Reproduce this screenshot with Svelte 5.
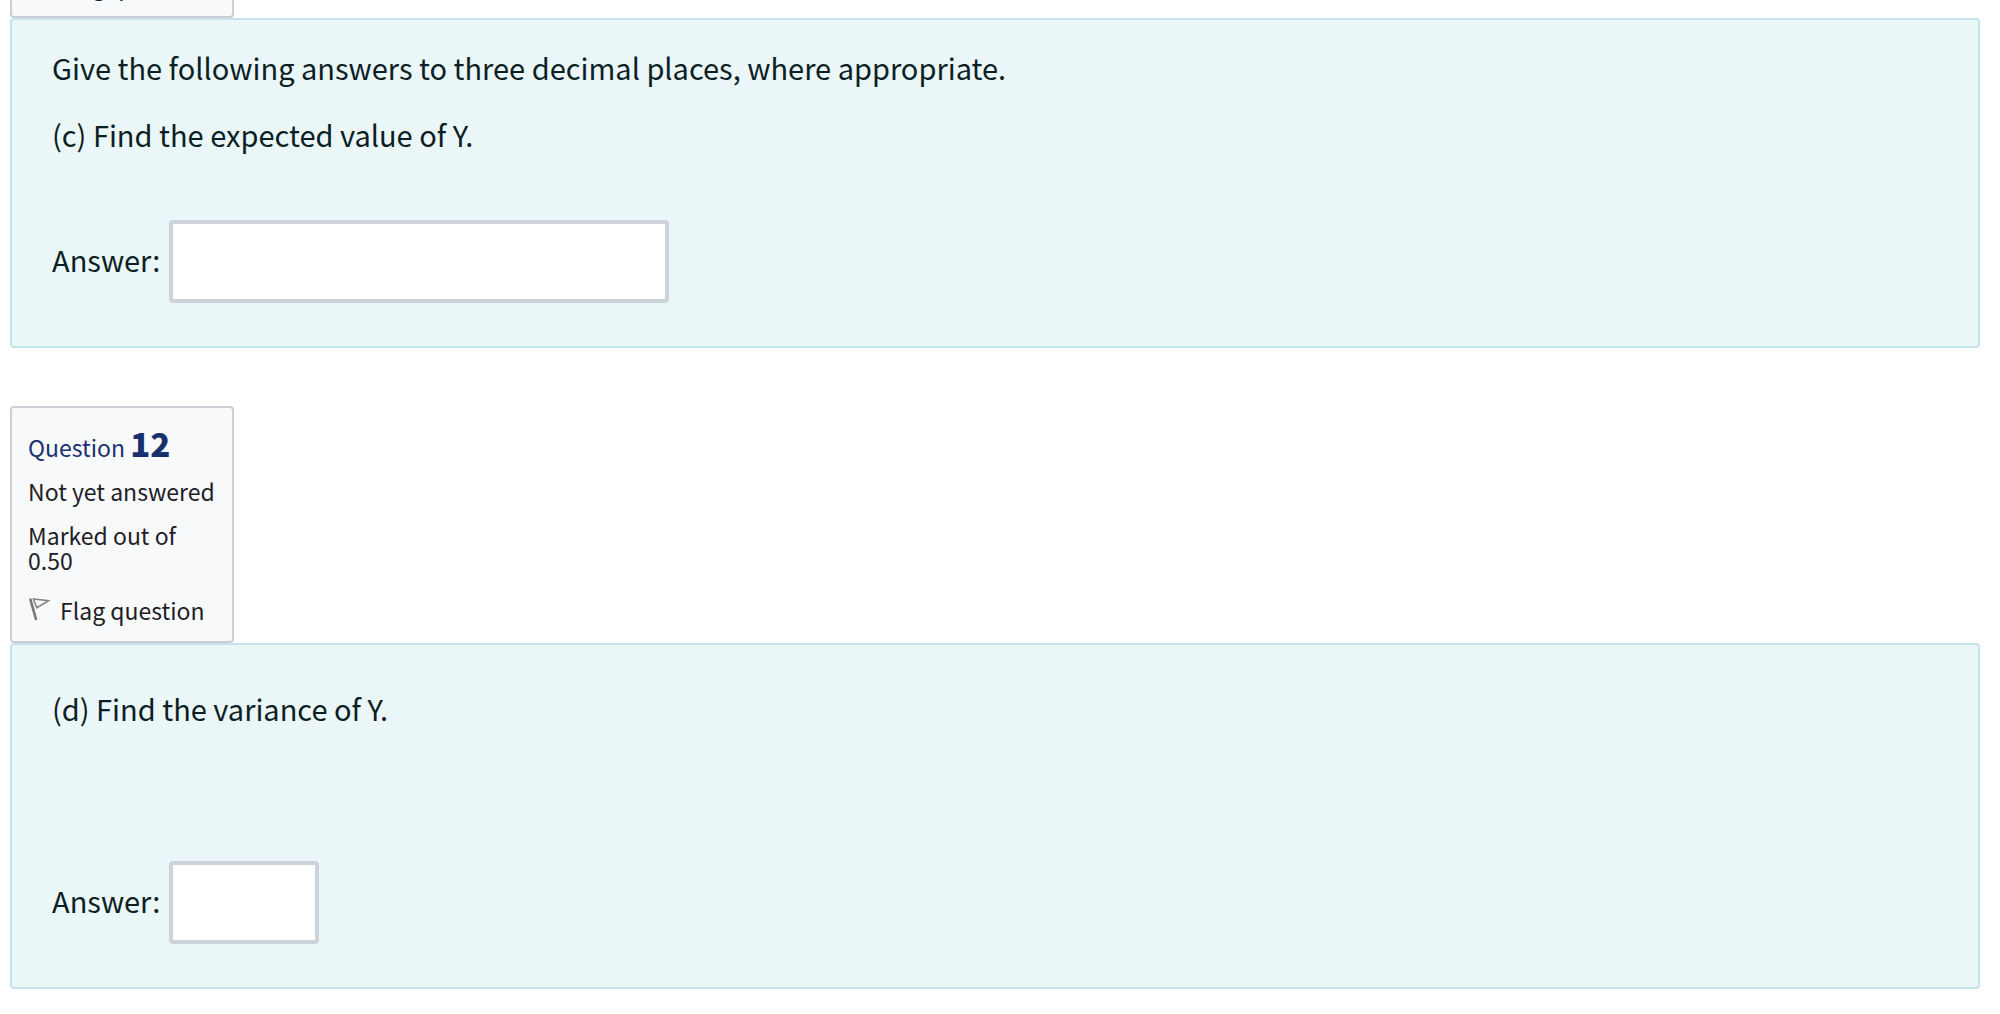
<script lang="ts">
    let questions = $state([
        {
            number: 11,
            paragraphs: [
                'Give the following answers to three decimal places, where appropriate.',
                '(c) Find the expected value of Y.'
            ],
            size: 'wide',
            spaced: false,
            answer: ''
        },
        {
            number: 12,
            paragraphs: ['(d) Find the variance of Y.', '\u00a0'],
            size: 'narrow',
            spaced: true,
            answer: ''
        }
    ]);
</script>

<main>
    {#each questions as q (q.number)}
        <section class="question">
            <div class="info">
                <h3>Question <span class="qno">{q.number}</span></h3>
                <div class="state">Not yet answered</div>
                <div class="grade">Marked out of 0.50</div>
                <a class="flag" href="#flag-{q.number}">
                    <svg width="22" height="24" viewBox="0 0 22 24" fill="none" aria-hidden="true">
                        <path d="M2.2 0.6 8.2 22" stroke="#777" stroke-width="2.6" />
                        <path d="M5.4 1 20.6 2.6 8.8 9.8Z" stroke="#858585" stroke-width="1.6" />
                    </svg>
                    <span>Flag question</span>
                </a>
            </div>

            <div class="formulation">
                <div class="qtext" class:spaced={q.spaced}>
                    {#each q.paragraphs as text}
                        <p>{text}</p>
                    {/each}
                </div>
                <div class="answer">
                    <label for="answer-{q.number}">Answer:</label>
                    <input id="answer-{q.number}" class={q.size} type="text" bind:value={q.answer} />
                </div>
            </div>
        </section>
    {/each}
</main>

<style>
    :global(body) {
        margin: 0;
        background: #fff;
    }

    main {
        display: flex;
        flex-direction: column;
        gap: 58px;
        /* first question is scrolled up so only the end of its info box shows */
        margin-top: -219px;
        padding: 0 20px 24px 10px;
        font-family: "Noto Sans CJK SC", "Open Sans", sans-serif;
    }

    .info {
        box-sizing: border-box;
        width: 224px;
        padding: 23px 16px 18px;
        border: 2px solid #caced6;
        border-radius: 4px;
        background: #f8f9fb;
        color: #1d2125;
        font-size: 23px;
        line-height: 25px;
    }

    h3 {
        margin: 0 0 19px;
        color: #19306f;
        font-size: 23px;
        font-weight: 400;
    }

    .qno {
        font-size: 33px;
        font-weight: 900;
    }

    .state {
        margin-bottom: 19px;
        white-space: nowrap;
    }

    .grade {
        margin-bottom: 25px;
    }

    .flag {
        display: flex;
        align-items: flex-start;
        gap: 10px;
        color: inherit;
        text-decoration: none;
        white-space: nowrap;
    }

    .flag svg {
        flex: none;
    }

    .formulation {
        padding: 27px 40px 43px;
        border: 2px solid #c5e3ea;
        border-radius: 4px;
        background: #eaf6f8;
        color: #0c1f25;
        font-size: 29px;
        line-height: 40px;
    }

    .qtext {
        margin-bottom: 66px;
    }

    .qtext.spaced {
        padding-top: 16px;
    }

    p {
        margin: 0 0 27px;
    }

    .answer {
        display: flex;
        align-items: center;
        gap: 9px;
    }

    label {
        padding-bottom: 6px;
    }

    input {
        box-sizing: border-box;
        height: 83px;
        padding: 12px 20px;
        border: 4px solid #cdd3d8;
        border-radius: 4px;
        background: #fff;
        color: inherit;
        font: inherit;
    }

    .wide {
        width: 500px;
    }

    .narrow {
        width: 150px;
    }
</style>
